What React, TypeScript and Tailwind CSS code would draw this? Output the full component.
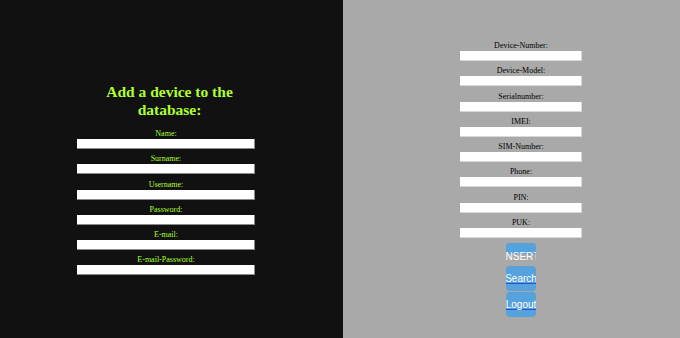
import React from 'react';

const userFields = ['Name:', 'Surname:', 'Username:', 'Password:', 'E-mail:', 'E-mail-Password:'];

const deviceFields = [
  'Device-Number:',
  'Device-Model:',
  'Serialnumber:',
  'IMEI:',
  'SIM-Number:',
  'Phone:',
  'PIN:',
  'PUK:',
];

function Field({ label, dark }: { label: string; dark?: boolean }) {
  return (
    <div className="flex flex-col mb-[5.3px]">
      <label
        className={`block text-center text-[8px] leading-[10px] ${dark ? 'text-[#adff2f]' : 'text-black'}`}
      >
        {label}
      </label>
      <input
        type="text"
        className={`block w-full h-[10px] bg-white border-0 border-b-[1.5px] border-r outline-none ${
          dark ? 'border-[#8a8a8a]' : 'border-[#d8d8d8]'
        }`}
      />
    </div>
  );
}

export default function App() {
  return (
    <div className="flex w-[680px] h-[338px] font-['Liberation_Serif',serif]">
      {/* user side */}
      <div className="w-[343px] h-full bg-[#111111] pt-[83px] pl-[77px]">
        <div className="w-[178px]">
          <h2 className="text-center pl-[7px] text-[15.5px] leading-[18px] font-bold text-[#adff2f] mb-[10px]">
            Add a device to the database:
          </h2>
          {userFields.map((f) => (
            <Field key={f} label={f} dark />
          ))}
        </div>
      </div>

      {/* device side */}
      <div className="flex-1 h-full bg-[#a9a9a9] pt-[41px] pl-[117px]">
        <div className="w-[122px]">
          {deviceFields.map((f) => (
            <Field key={f} label={f} />
          ))}

          <div className="flex flex-col items-center font-['Liberation_Sans',Arial,sans-serif] text-white text-[10px] mt-[2px]">
            <div className="w-[30px] h-[18px] overflow-hidden flex flex-col">
              <div className="h-[11px] rounded-t-[3px] bg-[#55a2dc] shrink-0" />
              <div className="flex justify-center -mt-[2px] leading-[9px] whitespace-nowrap">INSERT</div>
            </div>
            <a
              href="#"
              className="mt-[5px] w-[30px] h-[25px] rounded-[4px] bg-[#55a2dc] flex items-center justify-center overflow-hidden whitespace-nowrap underline decoration-[#2d4fd0]"
            >
              Search
            </a>
            <a
              href="#"
              className="mt-[1px] w-[30px] h-[25px] rounded-[4px] bg-[#55a2dc] flex items-center justify-center overflow-hidden whitespace-nowrap underline decoration-[#2d4fd0]"
            >
              Logout
            </a>
          </div>
        </div>
      </div>
    </div>
  );
}
